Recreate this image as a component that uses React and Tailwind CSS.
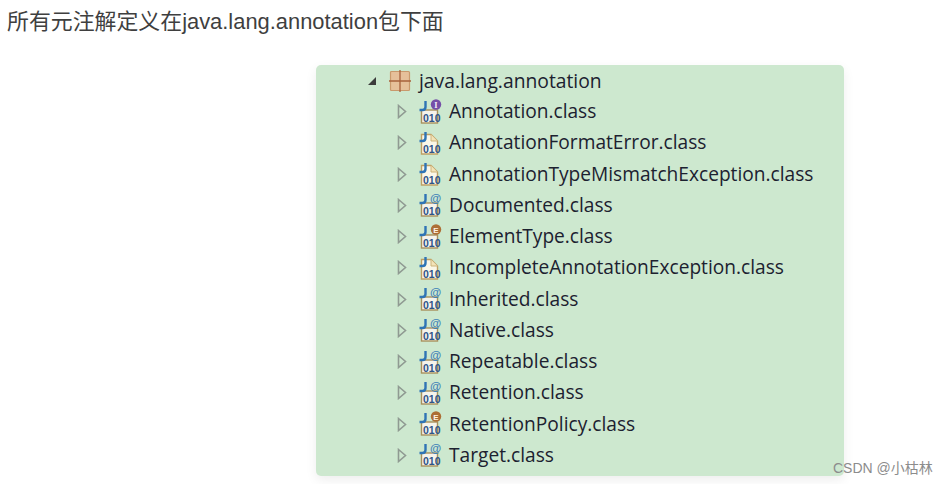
const rows = [
  ["Annotation.class", "I"], ["AnnotationFormatError.class", ""], ["AnnotationTypeMismatchException.class", ""],
  ["Documented.class", "@"], ["ElementType.class", "E"], ["IncompleteAnnotationException.class", ""],
  ["Inherited.class", "@"], ["Native.class", "@"], ["Repeatable.class", "@"], ["Retention.class", "@"],
  ["RetentionPolicy.class", "E"], ["Target.class", "@"]
];

function ClassIcon({ badge }) {
  return <svg width="24" height="24" viewBox="0 0 24 24" className="shrink-0 overflow-visible">
    {badge
      ? <rect x="3.500" y="10" width="16" height="13" fill="#f5f3ec" stroke="#a8905c" strokeWidth="1.400" />
      : <path d="M3.500 10V3.500H13l6.500 6.500V23H3.500Z" fill="#fbf7e8" stroke="#bfa064" strokeWidth="1.400" />}
    {!badge && <path d="M13 3.500V10h6.500" fill="#f3e3b8" stroke="#cdb57c" strokeWidth="1" />}
    <path d="M7.500 1v6q0 3-3 3H1.500" fill="none" stroke="#2f74b5" strokeWidth="2.400" />
    <text x="5" y="21.500" fontSize="10.500" fontWeight="700" fill="#2f5488" fontFamily="'Liberation Sans', sans-serif">010</text>
    {badge === "I" && <><circle cx="18" cy="4.500" r="5.200" fill="#7550a8" /><text x="18" y="7.500" fontSize="8.500" fontWeight="700" textAnchor="middle" fill="#f3edf9" fontFamily="'Liberation Serif', serif">I</text></>}
    {badge === "E" && <><circle cx="18" cy="4.500" r="5.200" fill="#ad6e35" /><text x="18" y="7.500" fontSize="8" fontWeight="700" textAnchor="middle" fill="#fff3e4" fontFamily="'Liberation Sans', sans-serif">E</text></>}
    {badge === "@" && <text x="17.500" y="8.500" fontSize="11.500" fontWeight="700" textAnchor="middle" fill="#3f82b8" fontFamily="'Liberation Sans', sans-serif">@</text>}
  </svg>;
}

function PackageIcon() {
  return <svg width="22" height="22" viewBox="0 0 22 22" className="shrink-0">
    <rect x="1.500" y="1.500" width="19" height="19" rx="1" fill="#e6c09a" stroke="#c9996c" strokeWidth="1.200" />
    <path d="M11 0v22M0 11h22" stroke="#a8623c" strokeWidth="1.300" />
  </svg>;
}

export default function App() {
  return <div className="relative h-[484px] w-[948px] overflow-hidden bg-white">
    <p className="pl-[7px] pt-[6px] text-[21.9px] leading-[31px] text-[#3f3f3f] font-['Liberation_Sans','Noto_Sans_CJK_SC',sans-serif]">所有元注解定义在java.lang.annotation包下面</p>
    <div className="ml-[316px] mt-[28px] h-[411px] w-[528px] rounded-[5px] bg-[#cde8cf] shadow-[0_4px_12px_rgba(0,0,0,0.07)] font-['Open_Sans',sans-serif] text-[#1c2130]">
      <div className="flex h-[31px] items-center pl-[50px]">
        <svg width="11" height="11" viewBox="0 0 11 11" className="shrink-0"><path d="M10 2v8H2Z" fill="#3c3c3c" /></svg>
        <span className="ml-[12px]"><PackageIcon /></span>
        <span className="ml-[8px] text-[19.3px] leading-none">java.lang.annotation</span>
      </div>
      <div className="grid auto-rows-[31.25px]">
        {rows.map(([name, badge]) => <div key={name} className="flex items-center pl-[81px]">
          <svg width="10" height="15" viewBox="0 0 10 15" className="shrink-0"><path d="M1.500 1.500l7 6-7 6Z" fill="none" stroke="#8f9a92" strokeWidth="1.600" /></svg>
          <span className="ml-[11px]"><ClassIcon badge={badge} /></span>
          <span className="ml-[7px] text-[19.15px] leading-none">{name}</span>
        </div>)}
      </div>
    </div>
    <span className="absolute left-[833px] top-[459px] text-[14px] leading-[18px] text-[#8c8c8c] font-['Liberation_Sans','Noto_Sans_CJK_SC',sans-serif]">CSDN @小枯林</span>
  </div>;
}
